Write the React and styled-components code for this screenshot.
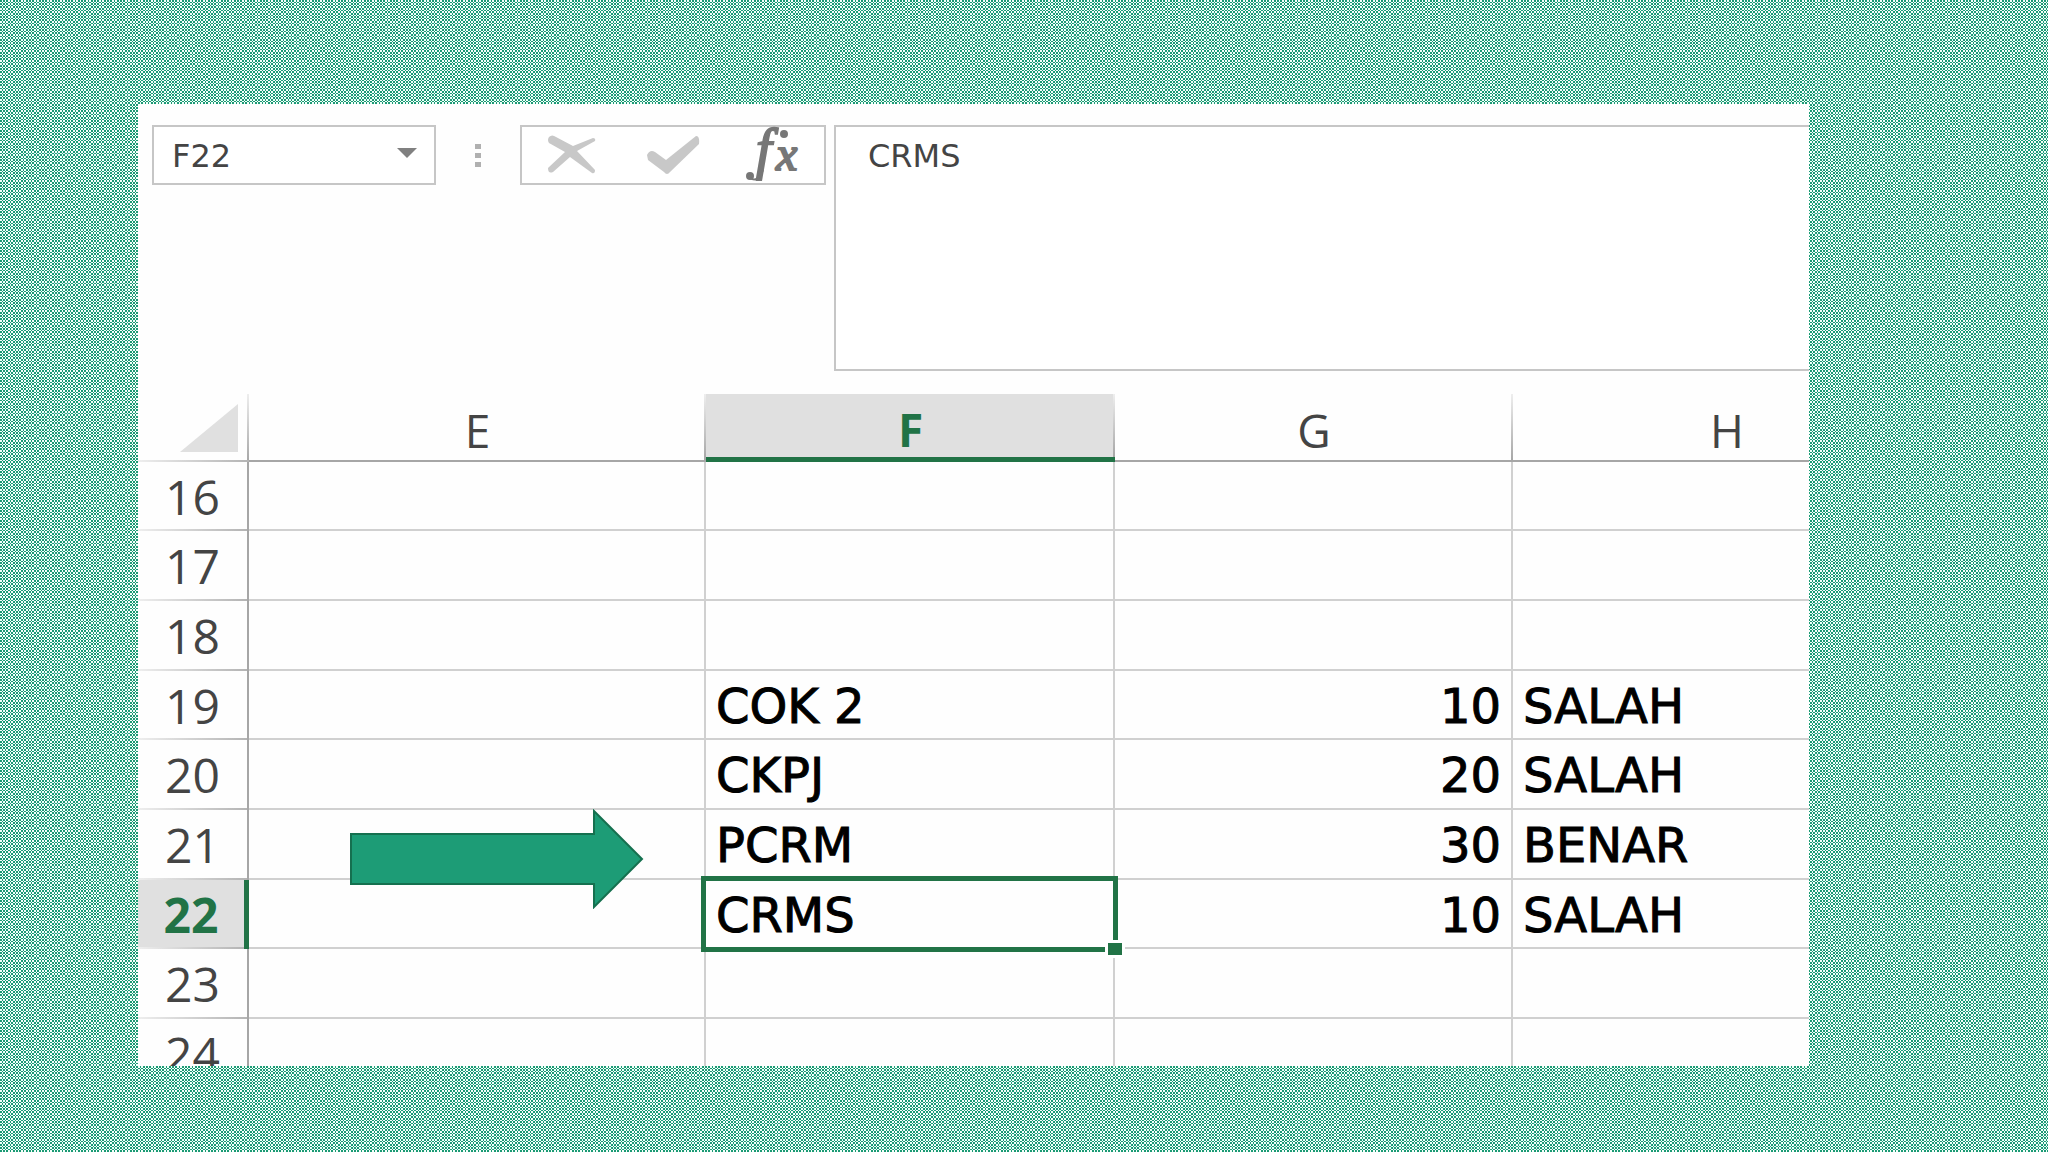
import React from 'react';
import styled, { createGlobalStyle, css } from 'styled-components';

const columns = ['E', 'F', 'G', 'H'];

const rows = [
  { number: 16 },
  { number: 17 },
  { number: 18 },
  { number: 19, F: 'COK 2', G: 10, H: 'SALAH' },
  { number: 20, F: 'CKPJ', G: 20, H: 'SALAH' },
  { number: 21, F: 'PCRM', G: 30, H: 'BENAR' },
  { number: 22, F: 'CRMS', G: 10, H: 'SALAH' },
  { number: 23 },
  { number: 24 },
];

const selected = { column: 'F', row: 22 };

// uneven checker: eight cells over a 13px tile
const edges = [0, 2, 3, 5, 6, 8, 10, 11, 13];
const cells = [];
for (let y = 0; y < 8; y++) {
  for (let x = y % 2; x < 8; x += 2) {
    const w = edges[x + 1] - edges[x];
    const h = edges[y + 1] - edges[y];
    cells.push(`M${edges[x]} ${edges[y]}h${w}v${h}h-${w}z`);
  }
}
const checker = encodeURIComponent(
  `<svg xmlns="http://www.w3.org/2000/svg" width="13" height="13"><path fill="#1b9a74" d="${cells.join('')}"/></svg>`
);

const GlobalStyle = createGlobalStyle`
  * {
    box-sizing: border-box;
  }
  body {
    margin: 0;
    font-family: "Open Sans", "Noto Sans", sans-serif;
    color: #444;
  }
`;

const App = () => (
  <Slide>
    <GlobalStyle />
    <Sheet>
      <FormulaBar>
        <NameBox>
          <NameSelect aria-label="Name Box" defaultValue="F22">
            <option>F22</option>
          </NameSelect>
          <Caret viewBox="0 0 20 10">
            <path d="M0 0h20L10 10z" />
          </Caret>
        </NameBox>
        <Grip>
          <i />
          <i />
          <i />
        </Grip>
        <Actions>
          <Action aria-label="Cancel">
            <svg width="50" height="40" viewBox="0 0 50 40">
              <path d="M2 2Q5 -1 9 2L26 11L46 3Q49 3 48 6L30 16L48 35Q48 39 45 38L23 22L6 37Q1 39 1 33L18 17L2 8Q0 5 2 2Z" />
            </svg>
          </Action>
          <Action aria-label="Enter">
            <svg width="54" height="40" viewBox="0 0 54 40">
              <path d="M1 20Q4 14 9 17L20 25L50 1Q54 1 53 9L24 37Q21 41 18 37L2 25Z" />
            </svg>
          </Action>
          <Action aria-label="Insert Function">
            <Fx width="54" height="56" viewBox="0 0 54 56">
              <text x="9" y="41" fontSize="56">f</text>
              <text x="29" y="43" fontSize="48">x</text>
              <circle cx="37" cy="7" r="3" />
              <circle cx="3" cy="49" r="3" />
              <path d="M3 51Q11 56 16 43" fill="none" />
            </Fx>
          </Action>
        </Actions>
        <Formula aria-label="Formula" defaultValue="CRMS" spellCheck={false} />
      </FormulaBar>

      <Grid>
        <colgroup>
          <Col $width={111} />
          <Col $width={457} />
          <Col $width={409} />
          <Col $width={398} />
          <Col $width={428} />
        </colgroup>
        <thead>
          <tr>
            <Corner>
              <SelectAll aria-label="Select all">
                <svg width="58" height="48" viewBox="0 0 58 48">
                  <path d="M58 0v48H0z" />
                </svg>
              </SelectAll>
            </Corner>
            {columns.map((name) => (
              <ColumnHead key={name} scope="col" $active={name === selected.column}>
                {name}
              </ColumnHead>
            ))}
          </tr>
        </thead>
        <tbody>
          {rows.map((row) => (
            <Row key={row.number}>
              <RowHead scope="row" $active={row.number === selected.row}>
                {row.number}
              </RowHead>
              {columns.map((name) => (
                <Cell key={name} $number={typeof row[name] === 'number'}>
                  {row[name]}
                  {name === selected.column && row.number === selected.row && (
                    <Selection>
                      <Handle />
                    </Selection>
                  )}
                  {name === 'E' && row.number === 21 && (
                    <Arrow viewBox="0 0 294 100">
                      <path d="M1 25H244V2L292 50L244 98V75H1Z" />
                    </Arrow>
                  )}
                </Cell>
              ))}
            </Row>
          ))}
        </tbody>
      </Grid>
    </Sheet>
  </Slide>
);

const Slide = styled.div`
  display: flex;
  height: 100vh;
  padding: 104px 239px 86px 138px;
  background: #f4fffb url("data:image/svg+xml,${checker}");
`;

const Sheet = styled.main`
  flex: 1;
  min-width: 0;
  padding-top: 21px;
  overflow: hidden;
  background: #fefefe;
`;

const FormulaBar = styled.div`
  display: flex;
  align-items: flex-start;
  height: 246px;
  margin: 0 0 23px 14px;
`;

const NameBox = styled.div`
  position: relative;
  width: 284px;
  height: 60px;
`;

const barText = css`
  font-family: "DejaVu Sans", sans-serif;
  font-size: 32px;
  line-height: 36px;
  color: #444;
`;

const NameSelect = styled.select`
  ${barText}
  appearance: none;
  width: 100%;
  height: 100%;
  padding: 2px 18px 0;
  border: 2px solid #c6c6c6;
  border-radius: 0;
  background: #fff;
`;

const Caret = styled.svg`
  position: absolute;
  top: 23px;
  right: 19px;
  width: 20px;
  height: 10px;
  fill: #808080;
  pointer-events: none;
`;

const Grip = styled.div`
  display: flex;
  flex-direction: column;
  justify-content: center;
  gap: 4px;
  height: 60px;
  margin: 0 39px;
  i {
    width: 6px;
    height: 5px;
    background: #b0b0b0;
  }
`;

const Actions = styled.div`
  display: flex;
  width: 306px;
  height: 60px;
  margin-right: 8px;
  border: 2px solid #c6c6c6;
  background: #fff;
`;

const Action = styled.button`
  display: flex;
  flex: 1;
  align-items: center;
  justify-content: center;
  padding: 0;
  border: 0;
  background: none;
  fill: #c8c8c8;
`;

const Fx = styled.svg`
  overflow: visible;
  font-family: "Liberation Serif", serif;
  font-style: italic;
  fill: #777;
  stroke: #777;
  stroke-width: 2;
`;

const Formula = styled.textarea`
  ${barText}
  flex: 1;
  min-width: 0;
  height: 246px;
  padding: 11px 32px;
  border: 2px solid #c6c6c6;
  border-right: 0;
  border-radius: 0;
  outline: 0;
  background: #fff;
  resize: none;
`;

const Grid = styled.table`
  width: 1803px;
  table-layout: fixed;
  border-collapse: separate;
  border-spacing: 0;
  font-size: 48px;
  line-height: 56px;
`;

const Col = styled.col`
  width: ${(props) => props.$width}px;
`;

const fadeDown = 'linear-gradient(#eee, #a6a6a6) right / 2px 100% no-repeat';
const fadeRight = 'linear-gradient(90deg, #eee, #b4b4b4) bottom / 100% 2px no-repeat';

const Corner = styled.th`
  height: 68px;
  padding: 0 11px 0 0;
  background: ${fadeRight}, ${fadeDown};
`;

const SelectAll = styled.button`
  display: block;
  margin-left: auto;
  padding: 0;
  border: 0;
  background: none;
  fill: #e0e0e0;
  svg {
    display: block;
  }
`;

const ColumnHead = styled.th`
  height: 68px;
  padding: 6px 0 0;
  border-bottom: 2px solid #a6a6a6;
  background: ${fadeDown};
  font-size: 46px;
  font-weight: 400;
  ${(props) =>
    props.$active &&
    css`
      border-bottom: 5px solid #217346;
      background: ${fadeDown}, #e0e0e0;
      color: #217346;
      font-weight: 700;
    `}
`;

const Row = styled.tr`
  height: 70px;
  &:nth-child(3n + 1) {
    height: 69px;
  }
`;

const RowHead = styled.th`
  padding: 0;
  border-right: 2px solid #a6a6a6;
  background: ${fadeRight};
  font-weight: 400;
  ${(props) =>
    props.$active &&
    css`
      border-right: 5px solid #217346;
      background: ${fadeRight}, #e0e0e0;
      color: #217346;
      font-weight: 700;
    `}
`;

const Cell = styled.td`
  position: relative;
  padding: 2px 10px 0;
  border: solid #d0d0d0;
  border-width: 0 2px 2px 0;
  font-family: "DejaVu Sans", sans-serif;
  color: #000;
  text-align: ${(props) => (props.$number ? 'right' : 'left')};
  -webkit-text-stroke: 1px #000;
`;

const Selection = styled.div`
  position: absolute;
  inset: -4px -5px -5px;
  z-index: 1;
  border: 5px solid #217346;
`;

const Handle = styled.div`
  position: absolute;
  right: -12px;
  bottom: -11px;
  width: 20px;
  height: 18px;
  border: 3px solid #fff;
  background: #217346;
`;

const Arrow = styled.svg`
  position: absolute;
  top: -1px;
  left: 101px;
  z-index: 1;
  width: 294px;
  height: 100px;
  fill: #1d9c76;
  stroke: #15704f;
  stroke-width: 2;
`;

export default App;
